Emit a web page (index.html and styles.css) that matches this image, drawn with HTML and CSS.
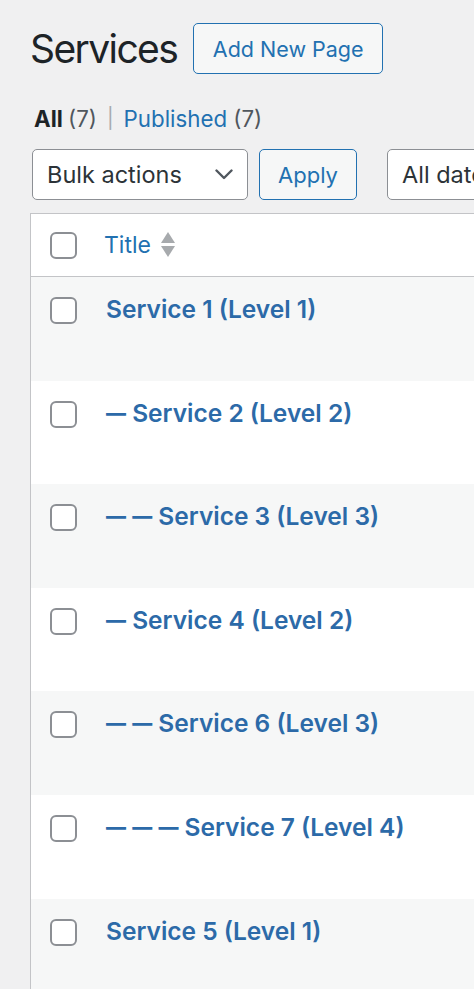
FILE: index.html
```html
<!DOCTYPE html>
<html lang="en">
<head>
<meta charset="utf-8">
<title>Services</title>
<link rel="stylesheet" href="styles.css">
</head>
<body>
<div class="wrap">
  <div class="head">
    <h1 class="page-title">Services</h1>
    <a class="btn-outline add-new" href="#">Add New Page</a>
  </div>
  <ul class="subsub">
    <li class="current">All <span class="count">(7)</span></li>
    <li class="sep">|</li>
    <li><a href="#">Published</a> <span class="count">(7)</span></li>
  </ul>
  <div class="tablenav">
    <div class="select bulk">
      <span>Bulk actions</span>
      <svg class="chev" width="18" height="11" viewBox="0 0 18 11"><path d="M1.5 1.5 L9 9 L16.5 1.5" fill="none" stroke="#50575e" stroke-width="2.4" stroke-linecap="round" stroke-linejoin="round"/></svg>
    </div>
    <a class="btn-outline apply" href="#">Apply</a>
    <div class="select dates"><span>All dates</span></div>
  </div>
  <div class="list">
    <div class="row head-row">
      <span class="cb"></span>
      <a class="col-title" href="#">Title
        <svg class="sort" width="14" height="26" viewBox="0 0 14 26"><path d="M7 0 L14 11 L0 11 Z" fill="#a7aaad"/><path d="M0 14 L14 14 L7 25 Z" fill="#a7aaad"/></svg>
      </a>
    </div>
    <div class="row item alt"><span class="cb"></span><a class="row-title" href="#">Service 1 (Level 1)</a></div>
    <div class="row item"><span class="cb"></span><a class="row-title" href="#"><span class="dash">—</span> Service 2 (Level 2)</a></div>
    <div class="row item alt"><span class="cb"></span><a class="row-title" href="#"><span class="dash">—</span> <span class="dash">—</span> Service 3 (Level 3)</a></div>
    <div class="row item"><span class="cb"></span><a class="row-title" href="#"><span class="dash">—</span> Service 4 (Level 2)</a></div>
    <div class="row item alt"><span class="cb"></span><a class="row-title" href="#"><span class="dash">—</span> <span class="dash">—</span> Service 6 (Level 3)</a></div>
    <div class="row item"><span class="cb"></span><a class="row-title" href="#"><span class="dash">—</span> <span class="dash">—</span> <span class="dash">—</span> Service 7 (Level 4)</a></div>
    <div class="row item alt"><span class="cb"></span><a class="row-title" href="#">Service 5 (Level 1)</a></div>
  </div>
</div>
</body>
</html>
```

FILE: styles.css
```css
html, body {
  margin: 0;
  padding: 0;
}
body {
  background: #f0f0f1;
  font-family: Inter, "Noto Sans", "Liberation Sans", sans-serif;
  color: #3c434a;
  overflow: hidden;
  width: 474px;
  height: 989px;
}
a { text-decoration: none; color: #2271b1; }

.wrap {
  padding-left: 30px;
  width: 700px;
}

.head {
  display: flex;
  align-items: center;
  margin-top: 23px;
  height: 51px;
}
.page-title {
  margin: 0 16px 0 0;
  font-size: 39px;
  font-weight: 400;
  color: #1d2327;
  letter-spacing: -1.6px;
  line-height: 1;
}
.btn-outline {
  display: flex;
  align-items: center;
  justify-content: center;
  box-sizing: border-box;
  border: 1.5px solid #2271b1;
  border-radius: 5px;
  background: #f6f7f7;
  color: #2271b1;
  font-size: 22px;
}
.add-new {
  width: 190px;
  height: 51px;
  font-size: 21.5px;
}

.subsub {
  list-style: none;
  margin: 29px 0 0 4px;
  padding: 0;
  display: flex;
  align-items: center;
  height: 30px;
  font-size: 22.3px;
  color: #50575e;
}
.subsub li { margin-right: 10px; white-space: nowrap; }
.subsub .current { color: #1d2327; font-weight: 700; }
.subsub .current .count { font-weight: 400; color: #50575e; }
.subsub .sep { color: #a7aaad; font-size: 20px; }

.tablenav {
  display: flex;
  align-items: center;
  margin-top: 16px;
  margin-left: 2px;
  height: 51px;
}
.select {
  box-sizing: border-box;
  height: 51px;
  border: 1.5px solid #8c8f94;
  border-radius: 5px;
  background: #fff;
  display: flex;
  align-items: center;
  padding-left: 14px;
  font-size: 23.5px;
  color: #2c3338;
}
.bulk {
  width: 216px;
  justify-content: space-between;
  padding-right: 14px;
}
.chev { display: block; }
.apply {
  width: 98px;
  height: 51px;
  margin-left: 11px;
}
.dates {
  margin-left: 30px;
  width: 200px;
}

.list {
  margin-top: 13px;
  border: 1.5px solid #c3c4c7;
  border-right: none;
  border-bottom: none;
  background: #fff;
  width: 660px;
}
.row {
  display: flex;
  align-items: flex-start;
  box-sizing: border-box;
  padding-left: 19px;
}
.head-row {
  height: 63px;
  align-items: center;
  border-bottom: 1.5px solid #c3c4c7;
}
.item {
  height: 103.6px;
  padding-top: 20px;
  background: #fff;
}
.item.alt { background: #f6f7f7; }
.cb {
  display: block;
  box-sizing: border-box;
  width: 27px;
  height: 27px;
  border: 2px solid #8c8f94;
  border-radius: 6px;
  background: #fff;
  flex: none;
}
.col-title {
  display: flex;
  align-items: center;
  margin-left: 27px;
  font-size: 23px;
  color: #2271b1;
}
.sort { margin-left: 10px; display: block; }
.row-title {
  margin-left: 29px;
  margin-top: -1px;
  font-size: 24.5px;
  font-weight: 600;
  color: #2c6aa8;
  line-height: 26px;
}
.dash {
  font-size: 20px;
  font-weight: 800;
  vertical-align: 2px;
}
```
